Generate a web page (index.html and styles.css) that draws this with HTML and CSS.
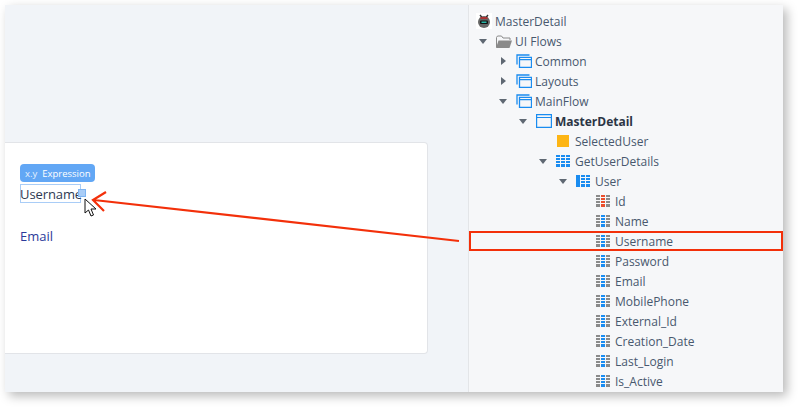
FILE: index.html
```html
<!DOCTYPE html>
<html lang="en">
<head>
<meta charset="utf-8">
<title>MasterDetail</title>
<link rel="stylesheet" href="styles.css">
</head>
<body>
<svg class="defs" width="0" height="0" aria-hidden="true">
  <defs>
    <symbol id="flow" viewBox="0 0 16 14">
      <path d="M1 10.500V1h12.500M3.500 13.300h12v-10h-12zM3.500 5.700h12" fill="none" stroke="#1a8cf0" stroke-width="1.300"/>
    </symbol>
    <symbol id="screen" viewBox="0 0 16 14">
      <path d="M.6.600h14.800v12.800H.6zM.6 3.500h14.800" fill="none" stroke="#1a8cf0" stroke-width="1.200"/>
    </symbol>
    <symbol id="aggregate" viewBox="0 0 14 12">
      <path d="M0 0h4v2H0zM5 0h4v2H5zM10 0h4v2h-4zM0 3h4v2H0zM5 3h4v2H5zM10 3h4v2h-4zM0 6h4v2H0zM5 6h4v2H5zM10 6h4v2h-4zM0 9h4v3H0zM5 9h4v3H5zM10 9h4v3h-4z" fill="#1a8cf0"/>
    </symbol>
    <symbol id="entity" viewBox="0 0 14 12">
      <path d="M0 0h4v12H0z" fill="#1a8cf0"/>
      <path d="M5 0h4v2H5zM10 0h4v2h-4zM5 3h4v2H5zM10 3h4v2h-4zM5 6h4v2H5zM10 6h4v2h-4zM5 9h4v3H5zM10 9h4v3h-4z" fill="#1a8cf0"/>
    </symbol>
    <symbol id="attr" viewBox="0 0 14 12">
      <path d="M0 0h4v2H0zM10 0h4v2h-4zM0 3h4v2H0zM10 3h4v2h-4zM0 6h4v2H0zM10 6h4v2h-4zM0 9h4v3H0zM10 9h4v3h-4z" fill="#8a8a8a"/>
      <path d="M5 0h4v2H5zM5 3h4v2H5zM5 6h4v2H5zM5 9h4v3H5z" fill="#1a8cf0"/>
    </symbol>
    <symbol id="attr-id" viewBox="0 0 14 12">
      <path d="M0 0h4v2H0zM10 0h4v2h-4zM0 3h4v2H0zM10 3h4v2h-4zM0 6h4v2H0zM10 6h4v2h-4zM0 9h4v3H0zM10 9h4v3h-4z" fill="#8a8a8a"/>
      <path d="M5 0h4v2H5zM5 3h4v2H5zM5 6h4v2H5zM5 9h4v3H5z" fill="#ea4f2c"/>
    </symbol>
  </defs>
</svg>

<main class="window">
  <section class="canvas">
    <div class="card">
      <div class="badge"><span class="badge-xy">x.y</span><span>Expression</span></div>
      <div class="selected-field">Username<span class="handle"></span></div>
      <div class="email">Email</div>
    </div>
  </section>

  <nav class="tree">
    <div class="row d0"><span class="islot"><svg class="mascot" viewBox="0 0 16 16"><rect width="16" height="16" fill="#fff"/><circle cx="8" cy="9" r="6" fill="#666"/><path d="M4 2l2.500 3M12 2L9.500 5" stroke="#333" stroke-width="1.400"/><rect x="4.500" y="4" width="7" height="2" fill="#a33"/><rect x="4" y="7.500" width="8" height="3.500" rx="1" fill="#111"/><rect x="5.500" y="8.500" width="5" height="1.500" fill="#27b5a5"/></svg></span><span>MasterDetail</span></div>
    <div class="row d0"><span class="slot"><i class="caret down"></i></span><span class="islot"><svg class="folder" viewBox="0 0 16 13"><path d="M.5 12V2.500L1.500 1h4l1.500 2h7v2" fill="none" stroke="#8a8a8a"/><path d="M0 13l2.500-7.500H16L13.500 13z" fill="#8a8a8a"/></svg></span><span>UI Flows</span></div>
    <div class="row d1"><span class="slot"><i class="caret right"></i></span><span class="islot"><svg class="ico16"><use href="#flow"/></svg></span><span>Common</span></div>
    <div class="row d1"><span class="slot"><i class="caret right"></i></span><span class="islot"><svg class="ico16"><use href="#flow"/></svg></span><span>Layouts</span></div>
    <div class="row d1"><span class="slot"><i class="caret down"></i></span><span class="islot"><svg class="ico16"><use href="#flow"/></svg></span><span>MainFlow</span></div>
    <div class="row d2"><span class="slot"><i class="caret down"></i></span><span class="islot"><svg class="ico16"><use href="#screen"/></svg></span><strong>MasterDetail</strong></div>
    <div class="row d4"><span class="islot"><i class="square"></i></span><span>SelectedUser</span></div>
    <div class="row d3"><span class="slot"><i class="caret down"></i></span><span class="islot"><svg class="ico14"><use href="#aggregate"/></svg></span><span>GetUserDetails</span></div>
    <div class="row d4"><span class="slot"><i class="caret down"></i></span><span class="islot"><svg class="ico14"><use href="#entity"/></svg></span><span>User</span></div>
    <div class="row d6"><span class="islot"><svg class="ico14"><use href="#attr-id"/></svg></span><span>Id</span></div>
    <div class="row d6"><span class="islot"><svg class="ico14"><use href="#attr"/></svg></span><span>Name</span></div>
    <div class="row d6"><span class="islot"><svg class="ico14"><use href="#attr"/></svg></span><span>Username</span></div>
    <div class="row d6"><span class="islot"><svg class="ico14"><use href="#attr"/></svg></span><span>Password</span></div>
    <div class="row d6"><span class="islot"><svg class="ico14"><use href="#attr"/></svg></span><span>Email</span></div>
    <div class="row d6"><span class="islot"><svg class="ico14"><use href="#attr"/></svg></span><span>MobilePhone</span></div>
    <div class="row d6"><span class="islot"><svg class="ico14"><use href="#attr"/></svg></span><span>External_Id</span></div>
    <div class="row d6"><span class="islot"><svg class="ico14"><use href="#attr"/></svg></span><span>Creation_Date</span></div>
    <div class="row d6"><span class="islot"><svg class="ico14"><use href="#attr"/></svg></span><span>Last_Login</span></div>
    <div class="row d6"><span class="islot"><svg class="ico14"><use href="#attr"/></svg></span><span>Is_Active</span></div>
  </nav>

  <div class="highlight"></div>
  <svg class="arrow" viewBox="0 0 798 408" width="798" height="408" aria-hidden="true">
    <path d="M459 241L94 200M106 192L93 200L104 211" fill="none" stroke="#f3300a" stroke-width="2.200"/>
  </svg>
  <svg class="cursor" viewBox="0 0 13 20" width="13" height="20" aria-hidden="true">
    <path d="M1 1v14l3.500-3 2.500 6 2.500-1-2.500-6h5z" fill="#fff" stroke="#111" stroke-width="1"/>
  </svg>
</main>
</body>
</html>
```

FILE: styles.css
```css
* { box-sizing: border-box; }
html, body { margin: 0; padding: 0; background: #fff; }
body { width: 798px; height: 408px; overflow: hidden; font-family: "Open Sans", sans-serif; }
.defs { position: absolute; }

.window {
  position: relative;
  display: flex;
  width: 778px;
  height: 387px;
  margin: 5px 0 0 5px;
  background: #f1f4f8;
  box-shadow: 4px 4px 10px rgba(0, 0, 0, .28);
}

.canvas { flex: none; width: 464px; padding-top: 137px; border-right: 1px solid #e3e5e8; }
.card {
  width: 423px;
  height: 212px;
  padding: 21px 0 0 15px;
  background: #fff;
  border: 1px solid #e2e4e8;
  border-left: 0;
  border-radius: 0 4px 4px 0;
}
.badge {
  display: flex;
  align-items: center;
  gap: 5px;
  width: 75px;
  height: 18px;
  padding-left: 5px;
  background: #62a7f5;
  border-radius: 4px;
  color: #fff;
  font-size: 9.500px;
  font-weight: 500;
  white-space: nowrap;
}
.badge-xy { font-weight: 400; opacity: .85; }
.selected-field {
  position: relative;
  width: 61px;
  height: 19px;
  margin-top: 2px;
  border: 1px solid #a9cdf7;
  color: #2e3a52;
  font-size: 13px;
  line-height: 18px;
  letter-spacing: -.1px;
  white-space: nowrap;
  text-indent: -1px;
}
.handle {
  position: absolute;
  left: 57px;
  top: 4px;
  width: 8px;
  height: 8px;
  background: #a9cdf7;
  border: 1px solid #7fb5f2;
}
.email { margin-top: 23px; color: #2b3a9a; font-size: 13px; line-height: 20px; }

.tree { flex: 1; padding-top: 6px; background: #f6f7f9; color: #48586e; font-size: 12px; overflow: hidden; }
.row { display: flex; align-items: center; height: 20px; white-space: nowrap; }
.row strong { color: #2c3545; font-weight: 700; }
.d0 { padding-left: 6px; }
.d1 { padding-left: 26px; }
.d2 { padding-left: 46px; }
.d3 { padding-left: 66px; }
.d4 { padding-left: 86px; }
.d6 { padding-left: 126px; }
.slot { display: flex; flex: none; align-items: center; justify-content: center; width: 20px; height: 20px; }
.islot { display: flex; flex: none; align-items: center; width: 20px; height: 20px; padding-left: 1px; }

.caret { display: block; width: 0; height: 0; border-style: solid; border-color: transparent; }
.caret.down { border-width: 5px 4.500px 0; border-top-color: #5f6873; margin-left: -4px; margin-top: 1px; }
.caret.right { border-width: 4.500px 0 4.500px 5px; border-left-color: #5f6873; margin-left: -4px; }
.square { display: block; width: 12px; height: 12px; margin-left: 1px; background: #fdb515; }
.mascot { width: 16px; height: 16px; }
.folder { width: 16px; height: 13px; }
.ico16 { width: 16px; height: 14px; }
.ico14 { width: 14px; height: 12px; }

.highlight {
  position: absolute;
  left: 464px;
  top: 226px;
  width: 314px;
  height: 20px;
  border: 2px solid #f3300a;
}
.arrow { position: absolute; left: -5px; top: -5px; pointer-events: none; }
.cursor { position: absolute; left: 79px; top: 193px; }
```
